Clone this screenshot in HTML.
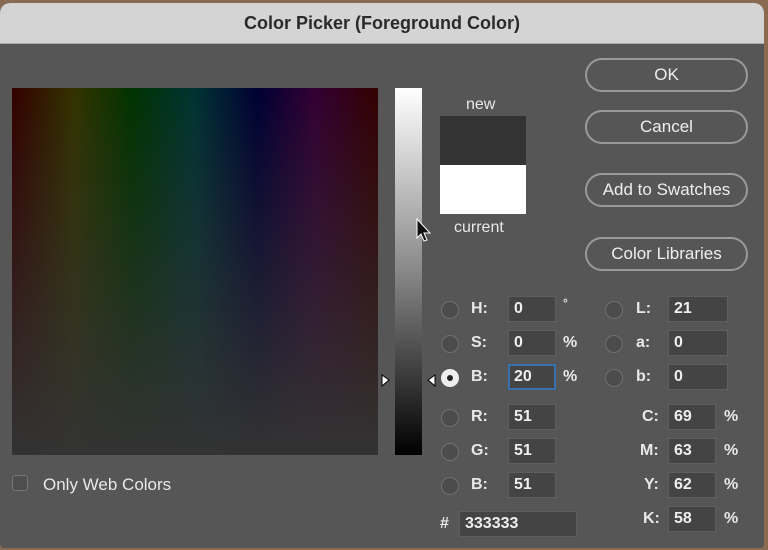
<!DOCTYPE html>
<html><head><style>
body{margin:0;width:768px;height:550px;background:#8a6a50;overflow:hidden;font-family:"Liberation Sans",sans-serif;position:relative}
.dlg{position:absolute;left:0;top:3px;width:764px;height:545px;background:#565656;border-radius:10px 10px 4px 4px;overflow:hidden}
.title{position:absolute;left:0;top:0;width:100%;height:40px;background:#d4d4d4;border-bottom:1px solid #aaa;text-align:center;line-height:40px;font-size:18px;font-weight:bold;color:#2a2a2a}
.a{position:absolute}
.t{position:absolute;color:#e8e8e8;font-size:16px;font-weight:bold}
.btn{position:absolute;left:585px;width:163px;height:34px;border:2px solid #9a9a9a;border-radius:19px;box-sizing:border-box;color:#eee;font-size:17px;text-align:center;line-height:30px}
.in{position:absolute;height:26px;background:#444;border:1px solid #5e5e5e;box-sizing:border-box;color:#eee;font-size:16px;font-weight:bold;line-height:24px;padding-left:5px}
.rad{position:absolute;width:18px;height:18px;border-radius:50%;border:1.5px solid #707070;background:#4c4c4c;box-sizing:border-box}
</style></head><body>
<div class="dlg">
<div class="title">Color Picker (Foreground Color)</div>
<div class="a" style="left:12px;top:85px;width:366px;height:367px;background:linear-gradient(to bottom,rgba(51,51,51,0),#333 100%),linear-gradient(to right,#330000,#333300 17%,#003300 33%,#003333 50%,#000033 67%,#330033 83%,#330000)"></div>
<div class="a" style="left:395px;top:85px;width:27px;height:367px;background:linear-gradient(#fff,#888 50%,#000)"></div>
<svg class="a" style="left:380px;top:370px" width="60" height="16"><path d="M2 2 L9 7 L2 13Z" fill="#fff" stroke="#000"/><path d="M55 2 L48 7 L55 13Z" fill="#fff" stroke="#000"/></svg>
<svg class="a" style="left:415px;top:215px" width="20" height="26"><path d="M2 1 L2 20 L6 16 L9 23 L12 22 L9 15 L15 15Z" fill="#111" stroke="#fff"/></svg>
<div class="t" style="left:466px;top:93px;font-weight:normal">new</div>
<div class="a" style="left:440px;top:113px;width:86px;height:49px;background:#333"></div>
<div class="a" style="left:440px;top:162px;width:86px;height:49px;background:#fff"></div>
<div class="t" style="left:454px;top:216px;font-weight:normal">current</div>
<div class="btn" style="top:55px">OK</div>
<div class="btn" style="top:107px">Cancel</div>
<div class="btn" style="top:170px">Add to Swatches</div>
<div class="btn" style="top:234px">Color Libraries</div>

<div class="rad" style="left:441px;top:298px"></div><div class="t" style="left:471px;top:297px">H:</div><div class="in" style="left:508px;top:293px;width:48px">0</div><div class="t" style="left:563px;top:293px;font-size:12px">°</div>
<div class="rad" style="left:441px;top:332px"></div><div class="t" style="left:471px;top:331px">S:</div><div class="in" style="left:508px;top:327px;width:48px">0</div><div class="t" style="left:563px;top:331px">%</div>
<div class="a" style="left:441px;top:366px;width:18px;height:18px;border-radius:50%;background:#eee"><div class="a" style="left:6px;top:6px;width:6px;height:6px;border-radius:50%;background:#222"></div></div><div class="t" style="left:471px;top:365px">B:</div><div class="in" style="left:508px;top:361px;width:48px;border:2px solid #3a6fb0;line-height:22px;padding-left:4px">20</div><div class="t" style="left:563px;top:365px">%</div>
<div class="rad" style="left:441px;top:406px"></div><div class="t" style="left:471px;top:405px">R:</div><div class="in" style="left:508px;top:401px;width:48px">51</div>
<div class="rad" style="left:441px;top:440px"></div><div class="t" style="left:471px;top:439px">G:</div><div class="in" style="left:508px;top:435px;width:48px">51</div>
<div class="rad" style="left:441px;top:474px"></div><div class="t" style="left:471px;top:473px">B:</div><div class="in" style="left:508px;top:469px;width:48px">51</div>
<div class="t" style="left:440px;top:512px">#</div><div class="in" style="left:459px;top:508px;width:118px">333333</div>

<div class="rad" style="left:605px;top:298px"></div><div class="t" style="left:636px;top:297px">L:</div><div class="in" style="left:668px;top:293px;width:60px">21</div>
<div class="rad" style="left:605px;top:332px"></div><div class="t" style="left:636px;top:331px">a:</div><div class="in" style="left:668px;top:327px;width:60px">0</div>
<div class="rad" style="left:605px;top:366px"></div><div class="t" style="left:636px;top:365px">b:</div><div class="in" style="left:668px;top:361px;width:60px">0</div>
<div class="t" style="left:642px;top:405px">C:</div><div class="in" style="left:668px;top:401px;width:48px">69</div><div class="t" style="left:724px;top:405px">%</div>
<div class="t" style="left:640px;top:439px">M:</div><div class="in" style="left:668px;top:435px;width:48px">63</div><div class="t" style="left:724px;top:439px">%</div>
<div class="t" style="left:644px;top:473px">Y:</div><div class="in" style="left:668px;top:469px;width:48px">62</div><div class="t" style="left:724px;top:473px">%</div>
<div class="t" style="left:643px;top:507px">K:</div><div class="in" style="left:668px;top:503px;width:48px">58</div><div class="t" style="left:724px;top:507px">%</div>

<div class="a" style="left:12px;top:472px;width:16px;height:16px;border:1.5px solid #777;border-radius:3px;box-sizing:border-box;background:#4e4e4e"></div>
<div class="t" style="left:43px;top:472px;font-weight:normal;font-size:17px">Only Web Colors</div>
</div>
</body></html>
